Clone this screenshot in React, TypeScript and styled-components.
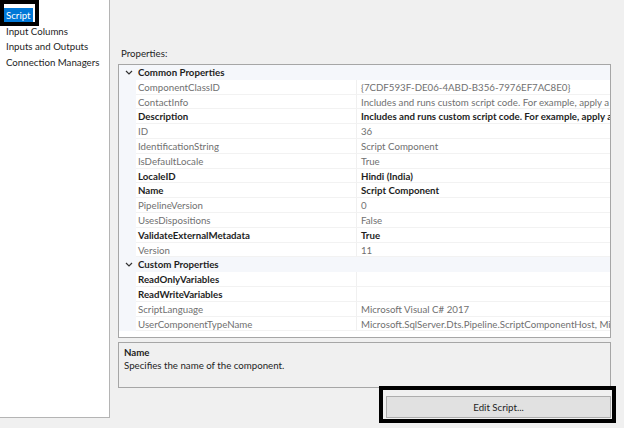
import React from "react";
import styled, { createGlobalStyle } from "styled-components";

const Global = createGlobalStyle`
  html, body { margin: 0; padding: 0; background: #f0f0f0; }
  body { font-family: Lato, "Noto Sans", sans-serif; }
`;

const Page = styled.div`
  position: relative;
  width: 624px;
  height: 428px;
  overflow: hidden;
  display: flex;
  align-items: flex-start;
  background: #f0f0f0;
  font-size: 9.7px;
  color: #1e1e1e;
`;

const PageList = styled.div`
  width: 110px;
  height: 418px;
  box-sizing: border-box;
  background: #fff;
  border: 1px solid #b4b4b4;
  border-top: none;
  border-left: none;
  padding-top: 8px;
  display: flex;
  flex-direction: column;
`;

const ListItem = styled.div<{ $selected?: boolean }>`
  height: 15.6px;
  line-height: 15px;
  padding: 0 ${(p) => (p.$selected ? "2px" : "0")} 0 ${(p) => (p.$selected ? "2px" : "5px")};
  white-space: nowrap;
  align-self: flex-start;
  margin-left: ${(p) => (p.$selected ? "4px" : "1px")};
  color: ${(p) => (p.$selected ? "#fff" : "#1e1e1e")};
  background: ${(p) => (p.$selected ? "#0078d7" : "transparent")};
`;

const Annotation = styled.div`
  position: absolute;
  left: 0;
  top: 0;
  width: 39px;
  height: 26px;
  box-sizing: border-box;
  border: 4px solid #000;
  pointer-events: none;
`;

const Main = styled.div`
  width: 493px;
  margin-left: 8px;
  display: flex;
  flex-direction: column;
  padding-top: 46px;
`;

const Label = styled.div`
  height: 18px;
  line-height: 15px;
  padding-left: 3px;
`;

const Grid = styled.div`
  height: 274px;
  box-sizing: border-box;
  border: 1px solid #a6a6a6;
  background: #fff;
  display: flex;
  flex-direction: column;
  overflow: hidden;
`;

const Row = styled.div<{ $category?: boolean }>`
  height: 14.8px;
  flex: none;
  display: grid;
  grid-template-columns: 17px 220px 1fr;
  background: ${(p) => (p.$category ? "#f5f7fb" : "#fff")};
  line-height: 14.8px;
  white-space: nowrap;
`;

const Gutter = styled.div`
  background: #f5f7fb;
  display: flex;
  align-items: center;
  justify-content: center;
  padding-left: 2px;
`;

const Cell = styled.div<{ $strong?: boolean; $value?: boolean }>`
  overflow: hidden;
  box-sizing: border-box;
  padding-left: ${(p) => (p.$value ? "4px" : "2px")};
  color: ${(p) => (p.$strong ? "#1e1e1e" : "#707070")};
  font-weight: ${(p) => (p.$strong ? 700 : 400)};
  border-bottom: 1px solid #f2f2f2;
  border-left: ${(p) => (p.$value ? "1px solid #f0f0f0" : "none")};
`;

const CategoryTitle = styled.div`
  grid-column: 2 / 4;
  font-weight: 700;
  color: #1e1e1e;
  padding-left: 2px;
`;

const Desc = styled.div`
  margin-top: 4px;
  height: 46px;
  box-sizing: border-box;
  border: 1px solid #a6a6a6;
  background: #f0f0f0;
  padding: 3px 5px;
  line-height: 13px;
`;

const DescTitle = styled.div`
  font-weight: 700;
`;

const ButtonRow = styled.div`
  display: flex;
  justify-content: flex-end;
  margin-right: -5px;
  margin-top: -2px;
`;

const ButtonFrame = styled.div`
  width: 237px;
  height: 37px;
  box-sizing: border-box;
  border: 4px solid #000;
  padding: 6px 0 1px 3px;
  display: flex;
  flex-direction: column;
  align-items: flex-start;
`;

const Button = styled.button`
  width: 225px;
  height: 22px;
  box-sizing: border-box;
  border: 1px solid #adadad;
  background: #e1e1e1;
  font-family: inherit;
  font-size: 9.7px;
  color: #1e1e1e;
  padding: 0;
`;

const Chevron = () => (
  <svg width="8" height="5" viewBox="0 0 8 5">
    <polyline points="1,1 4,4 7,1" fill="none" stroke="#333" strokeWidth="1.2" />
  </svg>
);

type Prop = { name: string; value: string; strong?: boolean };

const common: Prop[] = [
  { name: "ComponentClassID", value: "{7CDF593F-DE06-4ABD-B356-7976EF7AC8E0}" },
  { name: "ContactInfo", value: "Includes and runs custom script code. For example, apply a business rule that limits the range of valid values" },
  { name: "Description", value: "Includes and runs custom script code. For example, apply a business rule that limits the range of valid values", strong: true },
  { name: "ID", value: "36" },
  { name: "IdentificationString", value: "Script Component" },
  { name: "IsDefaultLocale", value: "True" },
  { name: "LocaleID", value: "Hindi (India)", strong: true },
  { name: "Name", value: "Script Component", strong: true },
  { name: "PipelineVersion", value: "0" },
  { name: "UsesDispositions", value: "False" },
  { name: "ValidateExternalMetadata", value: "True", strong: true },
  { name: "Version", value: "11" },
];

const custom: Prop[] = [
  { name: "ReadOnlyVariables", value: "", strong: true },
  { name: "ReadWriteVariables", value: "", strong: true },
  { name: "ScriptLanguage", value: "Microsoft Visual C# 2017" },
  { name: "UserComponentTypeName", value: "Microsoft.SqlServer.Dts.Pipeline.ScriptComponentHost, Microsoft.SqlServer.TxScript" },
];

const PropRow = ({ p }: { p: Prop }) => (
  <Row>
    <Gutter />
    <Cell $strong={p.strong}>{p.name}</Cell>
    <Cell $value $strong={p.strong}>{p.value}</Cell>
  </Row>
);

const Category = ({ title }: { title: string }) => (
  <Row $category>
    <Gutter>
      <Chevron />
    </Gutter>
    <CategoryTitle>{title}</CategoryTitle>
  </Row>
);

export default function App() {
  return (
    <Page>
      <Global />
      <PageList>
        <ListItem $selected>Script</ListItem>
        <ListItem>Input Columns</ListItem>
        <ListItem>Inputs and Outputs</ListItem>
        <ListItem>Connection Managers</ListItem>
      </PageList>
      <Annotation />
      <Main>
        <Label>Properties:</Label>
        <Grid>
          <Category title="Common Properties" />
          {common.map((p) => (
            <PropRow key={p.name} p={p} />
          ))}
          <Category title="Custom Properties" />
          {custom.map((p) => (
            <PropRow key={p.name} p={p} />
          ))}
        </Grid>
        <Desc>
          <DescTitle>Name</DescTitle>
          <div>Specifies the name of the component.</div>
        </Desc>
        <ButtonRow>
          <ButtonFrame>
            <Button>Edit Script...</Button>
          </ButtonFrame>
        </ButtonRow>
      </Main>
    </Page>
  );
}
